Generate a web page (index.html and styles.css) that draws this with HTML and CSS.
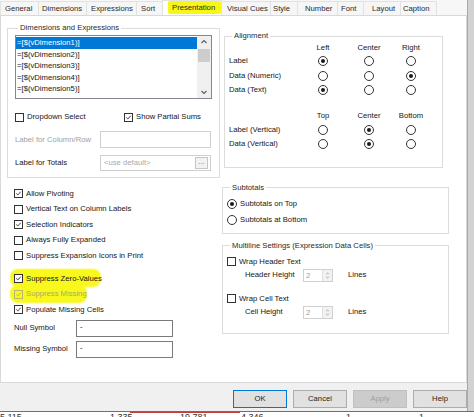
FILE: index.html
```html
<!DOCTYPE html>
<html>
<head>
<meta charset="utf-8">
<link rel="stylesheet" href="styles.css">
</head>
<body>
<div class="screen">
  <div class="top">
    <div class="dialog">
      <div class="tabs">
        <span class="tab t-general">General</span>
        <span class="tab t-dims">Dimensions</span>
        <span class="tab t-expr">Expressions</span>
        <span class="tab t-sort">Sort</span>
        <span class="tab t-pres active"><span class="hl">Presentation</span></span>
        <span class="tab t-vis">Visual Cues</span>
        <span class="tab t-style">Style</span>
        <span class="tab t-num">Number</span>
        <span class="tab t-font">Font</span>
        <span class="tab t-layout">Layout</span>
        <span class="tab t-cap">Caption</span>
      </div>
      <div class="panel">
        <div class="col-left">
          <fieldset class="grp grp-dims">
            <legend>Dimensions and Expressions</legend>
            <div class="listbox">
              <div class="items">
                <div class="item sel">=[$(vDimension1)]</div>
                <div class="item">=[$(vDimension2)]</div>
                <div class="item">=[$(vDimension3)]</div>
                <div class="item">=[$(vDimension4)]</div>
                <div class="item">=[$(vDimension5)]</div>
                <div class="item">Revenue</div>
              </div>
              <div class="vscroll">
                <svg class="arr" viewBox="0 0 14 12"><path d="M4.5 7 L7 4.5 L9.5 7"/></svg>
                <span class="thumb"></span>
                <span class="track"></span>
                <svg class="arr" viewBox="0 0 14 12"><path d="M4.5 5 L7 7.5 L9.5 5"/></svg>
              </div>
            </div>
            <div class="opt-row">
              <span class="chk chk-drop"><span class="cb"></span>Dropdown Select</span>
              <span class="chk"><span class="cb"><svg viewBox="0 0 9 9"><path d="M1.6 4.4 L3.6 6.4 L7.4 2.2"/></svg></span>Show Partial Sums</span>
            </div>
            <div class="field">
              <span class="flabel dim">Label for Column/Row</span>
              <span class="tbox dis"></span>
            </div>
            <div class="field field-tot">
              <span class="flabel">Label for Totals</span>
              <span class="tbox dis"><span class="ph">&lt;use default&gt;</span><span class="dots">...</span></span>
            </div>
          </fieldset>

          <div class="checks">
            <div class="crow"><span class="cb"><svg viewBox="0 0 9 9"><path d="M1.6 4.4 L3.6 6.4 L7.4 2.2"/></svg></span><span class="tx">Allow Pivoting</span></div>
            <div class="crow"><span class="cb"></span><span class="tx">Vertical Text on Column Labels</span></div>
            <div class="crow"><span class="cb"><svg viewBox="0 0 9 9"><path d="M1.6 4.4 L3.6 6.4 L7.4 2.2"/></svg></span><span class="tx">Selection Indicators</span></div>
            <div class="crow"><span class="cb"></span><span class="tx">Always Fully Expanded</span></div>
            <div class="crow"><span class="cb"></span><span class="tx">Suppress Expansion Icons in Print</span></div>
            <div class="crow gap"><span class="marker m1"></span><span class="cb"><svg viewBox="0 0 9 9"><path d="M1.6 4.4 L3.6 6.4 L7.4 2.2"/></svg></span><span class="tx">Suppress Zero-Values</span></div>
            <div class="crow dim"><span class="marker m2"></span><span class="cb dis"><svg viewBox="0 0 9 9"><path d="M1.6 4.4 L3.6 6.4 L7.4 2.2"/></svg></span><span class="tx">Suppress Missing</span></div>
            <div class="crow"><span class="cb"><svg viewBox="0 0 9 9"><path d="M1.6 4.4 L3.6 6.4 L7.4 2.2"/></svg></span><span class="tx">Populate Missing Cells</span></div>
          </div>

          <div class="sym">
            <div class="srow"><span class="slabel">Null Symbol</span><span class="tbox sbox">-</span></div>
            <div class="srow"><span class="slabel">Missing Symbol</span><span class="tbox sbox">-</span></div>
          </div>
        </div>

        <div class="col-right">
          <fieldset class="grp grp-align">
            <legend>Alignment</legend>
            <div class="agrid">
              <span></span><span class="hd">Left</span><span class="hd">Center</span><span class="hd">Right</span>
              <span class="rl">Label</span><span class="rc"><span class="rd on"></span></span><span class="rc"><span class="rd"></span></span><span class="rc"><span class="rd"></span></span>
              <span class="rl">Data (Numeric)</span><span class="rc"><span class="rd"></span></span><span class="rc"><span class="rd"></span></span><span class="rc"><span class="rd on"></span></span>
              <span class="rl">Data (Text)</span><span class="rc"><span class="rd on"></span></span><span class="rc"><span class="rd"></span></span><span class="rc"><span class="rd"></span></span>
            </div>
            <div class="agrid agrid2">
              <span></span><span class="hd">Top</span><span class="hd">Center</span><span class="hd">Bottom</span>
              <span class="rl">Label (Vertical)</span><span class="rc"><span class="rd"></span></span><span class="rc"><span class="rd on"></span></span><span class="rc"><span class="rd"></span></span>
              <span class="rl">Data (Vertical)</span><span class="rc"><span class="rd"></span></span><span class="rc"><span class="rd on"></span></span><span class="rc"><span class="rd"></span></span>
            </div>
          </fieldset>

          <fieldset class="grp grp-sub">
            <legend>Subtotals</legend>
            <div class="rrow"><span class="rd on"></span>Subtotals on Top</div>
            <div class="rrow"><span class="rd"></span>Subtotals at Bottom</div>
          </fieldset>

          <fieldset class="grp grp-multi">
            <legend>Multiline Settings (Expression Data Cells)</legend>
            <div class="mrow"><span class="cb"></span>Wrap Header Text</div>
            <div class="spinrow">
              <span class="splabel">Header Height</span>
              <span class="spin"><span class="spv">2</span><span class="spb"><svg viewBox="0 0 10 13"><path d="M3.5 5 L5 3.5 L6.5 5 M3.5 8 L5 9.5 L6.5 8"/></svg></span></span>
              <span class="lines">Lines</span>
            </div>
            <div class="mrow mrow2"><span class="cb"></span>Wrap Cell Text</div>
            <div class="spinrow">
              <span class="splabel">Cell Height</span>
              <span class="spin"><span class="spv">2</span><span class="spb"><svg viewBox="0 0 10 13"><path d="M3.5 5 L5 3.5 L6.5 5 M3.5 8 L5 9.5 L6.5 8"/></svg></span></span>
              <span class="lines">Lines</span>
            </div>
          </fieldset>
        </div>
      </div>
      <div class="footer">
        <span class="btn default">OK</span>
        <span class="btn">Cancel</span>
        <span class="btn disabled">Apply</span>
        <span class="btn">Help</span>
      </div>
    </div>
    <div class="side"></div>
  </div>
  <div class="behind">
    <span class="redline"></span>
    <span class="n n1">5,115</span>
    <span class="n n2">1,335</span>
    <span class="n n3">19,781</span>
    <span class="n n4">4,346</span>
    <span class="n n5">1</span>
    <span class="n n6">1</span>
  </div>
</div>
</body>
</html>
```
FILE: styles.css
```css
* { box-sizing: border-box; margin: 0; padding: 0; }
html, body { width: 474px; height: 417px; overflow: hidden; background: #fff; }
body {
  font-family: "Liberation Sans", Arial, sans-serif;
  font-size: 7.7px;
  line-height: 10px;
  color: #151515;
}
.screen { width: 474px; height: 417px; display: flex; flex-direction: column; }
.top { height: 412px; display: flex; border-bottom: 1px solid #6f6f6f; }
.dialog { width: 467px; display: flex; flex-direction: column; background: #f0f0f0; }
.side { flex: 1; background: #d2d2d2; border-left: 1px solid #a9a9a9; }

/* tabs */
.tabs { height: 15px; display: flex; align-items: flex-end; background: #f7f7f7; }
.tab {
  height: 14px; padding-top: 2px; text-align: left;
  border: 1px solid #e2e2e2; border-bottom: none; margin-right: -1px;
  background: #f6f6f6; white-space: nowrap; color: #2a2a2a;
}
.tab.active { height: 15px; background: #fff; padding-top: 0; position: relative; z-index: 1; }
.hl { display: block; height: 13px; padding: 2px 4px 0; background: #f7f716; border-radius: 2px; }
.t-general { width: 39px; padding-left: 4px; }
.t-dims { width: 49px; padding-left: 3px; }
.t-expr { width: 51px; padding-left: 4px; }
.t-sort { width: 27px; padding-left: 4px; }
.t-pres { width: 60px; padding-left: 5px; }
.t-vis { width: 50px; padding-left: 5px; }
.t-style { width: 28px; padding-left: 2px; }
.t-num { width: 41px; padding-left: 7px; }
.t-font { width: 27px; padding-left: 3px; }
.t-layout { width: 38px; padding-left: 8px; }
.t-cap { width: 37px; padding-left: 2px; }

/* panel */
.panel {
  height: 368px; background: #fff; border: 1px solid #d9d9d9;
  display: flex; align-items: flex-start;
}
.col-left { width: 221px; padding-left: 6px; display: flex; flex-direction: column; }
.col-right { width: 228px; display: flex; flex-direction: column; }

.grp { border: 1px solid #dcdcdc; border-radius: 0; }
.grp legend { padding: 0 2px; margin-left: 3px; line-height: 10px; color: #2a2a2a; }

/* dimensions group */
.grp-dims { width: 213px; margin-top: 7px; padding: 2px 7px 6px 7px; }
.listbox { width: 197px; height: 64px; border: 1px solid #828790; display: flex; }
.items { flex: 1; overflow: hidden; padding-top: 1px; }
.item { height: 11.6px; line-height: 11.6px; padding-left: 1px; white-space: nowrap; }
.item.sel { background: #0078d7; color: #fff; }
.vscroll { width: 14px; background: #f0f0f0; display: flex; flex-direction: column; }
.arr { width: 14px; height: 12px; display: block; }
.arr path { fill: none; stroke: #606060; stroke-width: 1.2; }
.thumb { height: 13px; margin: 1px 1px 0; background: #cdcdcd; }
.track { flex: 1; }

.opt-row { display: flex; margin-top: 13px; height: 10px; align-items: center; }
.chk { display: flex; align-items: center; white-space: nowrap; }
.chk-drop { width: 109px; }
.cb {
  width: 9px; height: 9px; border: 1px solid #333; background: #fff;
  margin-right: 3px; flex: none; display: inline-flex;
}
.cb svg { width: 7px; height: 7px; }
.cb path { fill: none; stroke: #222; stroke-width: 1.1; }
.cb.dis { border-color: #b8b86a; background: transparent; }
.cb.dis path { stroke: #b0b060; }

.field { display: flex; align-items: center; margin-top: 9px; height: 17px; }
.field-tot { margin-top: 7px; height: 16px; }
.flabel { width: 85px; white-space: nowrap; }
.flabel.dim { color: #a0a0a0; }
.tbox {
  width: 111px; height: 100%; border: 1px solid #7a7a7a; background: #fff;
  display: flex; align-items: center; padding-left: 3px;
}
.tbox.dis { border-color: #cfcfcf; }
.ph { flex: 1; color: #a8a8a8; }
.dots {
  width: 13px; height: 12px; margin-right: 2px; border: 1px solid #c6c6c6; background: #f2f2f2;
  color: #777; text-align: center; line-height: 8px; font-size: 8px;
}

/* check list */
.checks { margin-top: 8px; padding-left: 7px; }
.crow { height: 15.5px; display: flex; align-items: center; white-space: nowrap; position: relative; }
.crow.gap { margin-top: 7.5px; }
.crow.dim { color: #a8a86c; }
.crow .cb, .crow .tx { position: relative; z-index: 1; }
.marker {
  position: absolute; z-index: 0; left: -3px; height: 16px; top: -1px;
  background: #f8f81c; border-radius: 7px; box-shadow: 0 0 2px 1px #f8f81c;
}
.m1 { width: 89px; }
.m2 { width: 75px; }

.sym { margin-top: 2px; padding-left: 7px; }
.srow { display: flex; align-items: center; height: 17px; }
.srow + .srow { margin-top: 4px; }
.slabel { width: 62px; }
.sbox { width: 97px; border-color: #7a7a7a; align-items: flex-start; padding-top: 1px; }

/* right column */
.grp-align { width: 219px; margin-left: 2px; margin-top: 15px; padding: 0 0 15px 4px; }
.agrid { display: grid; grid-template-columns: 71px 46px 46px 38px; grid-auto-rows: 14.5px; grid-template-rows: 13px; align-items: center; }
.agrid2 { margin-top: 12px; }
.hd { text-align: center; }
.rl { white-space: nowrap; }
.rc { display: flex; justify-content: center; }
.rd {
  width: 10px; height: 10px; border: 1px solid #333; border-radius: 50%; background: #fff;
  display: inline-flex; align-items: center; justify-content: center; flex: none;
}
.rd.on::after { content: ""; width: 4px; height: 4px; border-radius: 50%; background: #1a1a1a; }

.grp-sub { width: 227px; margin-top: 15px; padding: 3px 0 5px 4px; }
.rrow { height: 16px; display: flex; align-items: center; }
.rrow .rd { margin-right: 3px; }

.grp-multi { width: 227px; margin-top: 7px; padding: 5px 0 14px 4px; }
.mrow { height: 12px; display: flex; align-items: center; }
.mrow2 { margin-top: 11px; }
.spinrow { display: flex; align-items: center; height: 13px; margin-top: 1px; padding-left: 18px; }
.splabel { width: 58px; }
.spin { width: 30px; height: 13px; border: 1px solid #d0d0d0; display: flex; }
.spv { flex: 1; color: #a0a0a0; padding-left: 2px; line-height: 11px; }
.spb { width: 10px; background: #f2f2f2; border-left: 1px solid #e0e0e0; }
.spb svg { width: 9px; height: 11px; display: block; }
.spb path { fill: none; stroke: #8a8a8a; stroke-width: 0.9; }
.lines { margin-left: 15px; }

/* footer */
.footer { flex: 1; display: flex; justify-content: flex-end; align-items: flex-start; gap: 6px; padding-top: 7px; }
.btn {
  width: 54px; height: 18px; border: 1px solid #adadad; background: #e1e1e1;
  text-align: center; line-height: 16px; color: #1e1e1e;
}
.btn.default { border-color: #0078d7; }
.btn.disabled { background: #cccccc; border-color: #bfbfbf; color: #a0a0a0; }

/* window behind */
.behind { flex: 1; position: relative; overflow: hidden; background: #fff; font-size: 9px; color: #333; }
.redline { position: absolute; left: 130px; width: 110px; top: 0; height: 1px; background: #c04040; }
.n { position: absolute; top: 1px; line-height: 9px; }
.n1 { left: 0; }
.n2 { left: 110px; }
.n3 { left: 180px; }
.n4 { left: 241px; }
.n5 { left: 346px; }
.n6 { left: 419px; }
```
